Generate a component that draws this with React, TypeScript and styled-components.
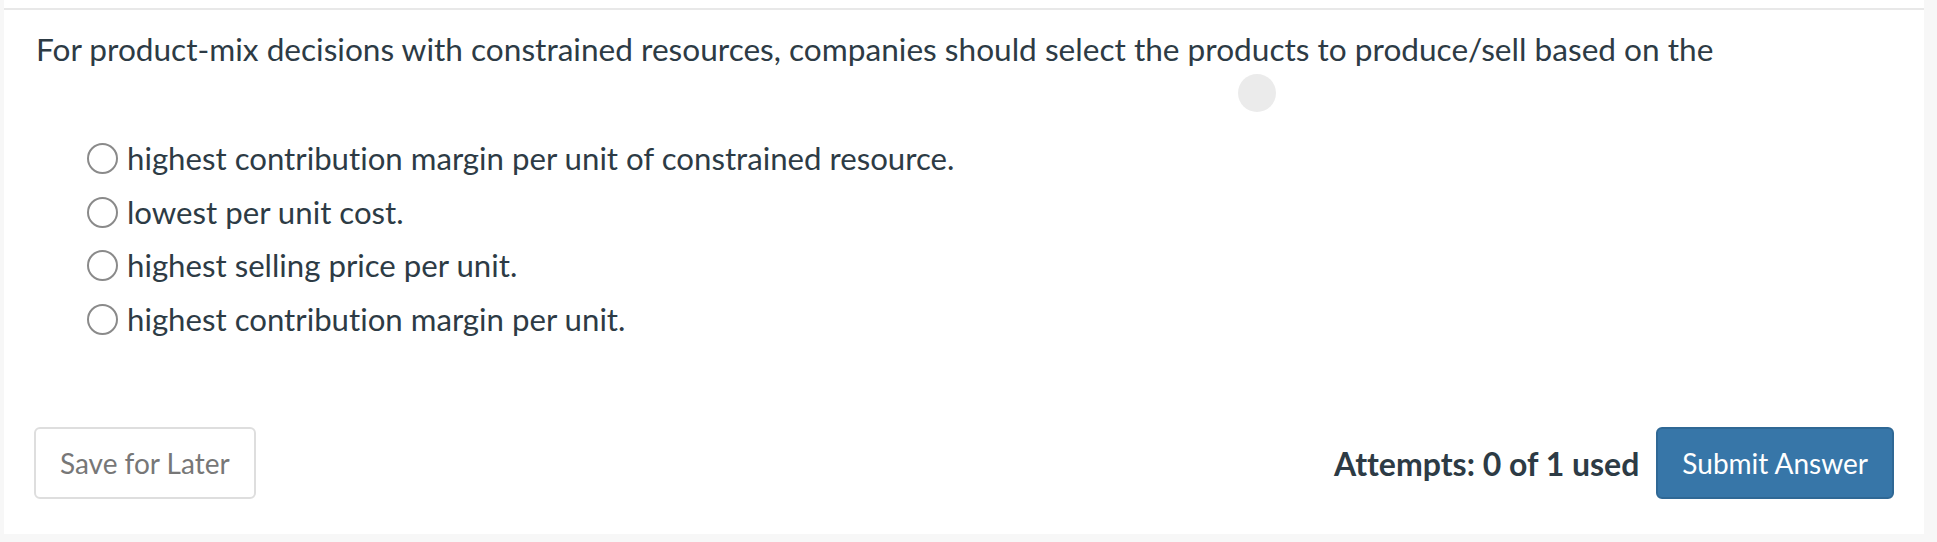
import React from "react";
import styled, { createGlobalStyle } from "styled-components";

const GlobalStyle = createGlobalStyle`
  html, body {
    margin: 0;
    padding: 0;
    background: #f7f7f7;
  }
  body {
    font-family: Lato, "Open Sans", "Liberation Sans", sans-serif;
    font-variant-ligatures: none;
    color: #2d3b45;
  }
`;

const options = [
  "highest contribution margin per unit of constrained resource.",
  "lowest per unit cost.",
  "highest selling price per unit.",
  "highest contribution margin per unit.",
];

const App = () => {
  return (
    <>
      <GlobalStyle />
      <Panel>
        <Card>
          <Question>
            For product-mix decisions with constrained resources, companies should select the products to
            produce/sell based on the
          </Question>
          <CursorDot />
          <Options>
            {options.map((text) => (
              <Option key={text}>
                <Radio type="radio" name="answer" />
                <span>{text}</span>
              </Option>
            ))}
          </Options>
          <Footer>
            <SaveButton>Save for Later</SaveButton>
            <Actions>
              <Attempts>Attempts: 0 of 1 used</Attempts>
              <SubmitButton>Submit Answer</SubmitButton>
            </Actions>
          </Footer>
        </Card>
      </Panel>
    </>
  );
};

const Panel = styled.div`
  margin-left: 4px;
  width: 1920px;
  height: 534px;
  padding-top: 8px;
  box-sizing: border-box;
  background: #ffffff;
`;

const Card = styled.div`
  position: relative;
  border-top: 2px solid #e8e8e8;
  padding: 18px 30px 0 32px;
`;

const Question = styled.p`
  margin: 0;
  font-size: 31.6px;
  line-height: 42px;
`;

const CursorDot = styled.div`
  position: absolute;
  left: 1234px;
  top: 64px;
  width: 38px;
  height: 38px;
  border-radius: 50%;
  background: #ebebeb;
`;

const Options = styled.div`
  display: flex;
  flex-direction: column;
  margin-top: 62px;
  padding-left: 51px;
`;

const Option = styled.label`
  display: flex;
  align-items: center;
  gap: 9px;
  height: 53.5px;
  font-size: 31.2px;
  line-height: 53.5px;
`;

const Radio = styled.input`
  appearance: none;
  margin: 0;
  width: 31px;
  height: 31px;
  border: 2px solid #8a8a8a;
  border-radius: 50%;
  background: #fff;
  box-sizing: border-box;
  flex-shrink: 0;
`;

const Footer = styled.div`
  display: flex;
  justify-content: space-between;
  align-items: center;
  margin-top: 81px;
`;

const Actions = styled.div`
  display: flex;
  align-items: center;
  gap: 17px;
`;

const Attempts = styled.span`
  font-size: 32px;
  font-weight: 700;
`;

const BaseButton = styled.button`
  height: 72px;
  padding: 0 24px;
  border-radius: 6px;
  font-family: Lato, "Open Sans", "Liberation Sans", sans-serif;
  font-variant-ligatures: none;
  font-size: 28px;
  cursor: pointer;
`;

const SaveButton = styled(BaseButton)`
  margin-left: -2px;
  background: #ffffff;
  border: 2px solid #dedede;
  color: #777777;
`;

const SubmitButton = styled(BaseButton)`
  background: #3776a8;
  border: 2px solid #2f6895;
  color: #ffffff;
`;

export default App;
